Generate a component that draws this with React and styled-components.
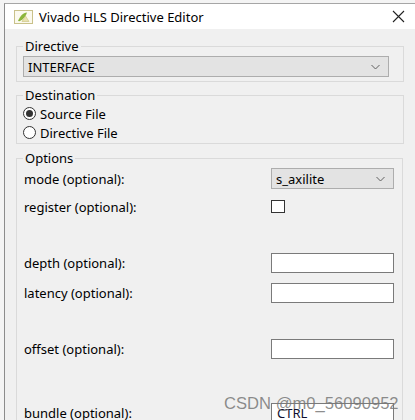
import React from 'react';
import styled, { createGlobalStyle } from 'styled-components';

const GlobalStyle = createGlobalStyle`
  html, body {
    margin: 0;
    padding: 0;
    background: #f4f4f4;
    overflow: hidden;
  }
  body {
    font-family: "Noto Sans", "Open Sans", sans-serif;
    font-size: 13px;
    color: #000;
  }
`;

const Screen = styled.div`
  width: 415px;
  height: 420px;
  padding: 3px 0 0 4px;
  box-sizing: border-box;
  position: relative;
  overflow: hidden;
`;

const Dialog = styled.div`
  width: 430px;
  height: 430px;
  background: #f0f0f0;
  border-left: 1px solid #8c8c8c;
  border-top: 1px solid #a6a6a6;
`;

const TitleBar = styled.div`
  height: 25px;
  background: #fff;
  display: flex;
  align-items: center;
  padding-left: 9px;
  gap: 6px;
  font-size: 13px;
`;

const Close = styled.div`
  margin-left: auto;
  margin-right: 30px;
  display: flex;
`;

const Body = styled.div`
  padding: 8px 0 0 11px;
  display: flex;
  flex-direction: column;
`;

const Group = styled.fieldset`
  width: ${p => p.$width || 387}px;
  box-sizing: border-box;
  margin: ${p => p.$top || 0}px 0 0;
  padding: 0 8px ${p => p.$bottom || 0}px 6px;
  border: 1px solid #dadada;
  min-width: 0;
`;

const Legend = styled.legend`
  padding: 0 2px;
  line-height: 18px;
  font-size: 13px;
`;

const Combo = styled.div`
  height: 21px;
  box-sizing: border-box;
  margin-top: ${p => p.$top || 0}px;
  width: ${p => p.$width ? `${p.$width}px` : 'auto'};
  background: #e3e3e3;
  border: 1px solid #adadad;
  display: flex;
  align-items: center;
  padding: 0 8px 0 4px;
  font-size: 13px;
  justify-content: space-between;
`;

const Radios = styled.div`
  display: flex;
  flex-direction: column;
`;

const RadioRow = styled.label`
  height: 19px;
  display: flex;
  align-items: center;
  gap: 4px;
`;

const RadioDot = styled.span`
  width: 13px;
  height: 13px;
  box-sizing: border-box;
  border-radius: 50%;
  border: 1px solid #333;
  background: #fff;
  display: flex;
  align-items: center;
  justify-content: center;

  &::after {
    content: '';
    width: 7px;
    height: 7px;
    border-radius: 50%;
    background: ${p => p.$checked ? '#333' : 'transparent'};
  }
`;

const Row = styled.div`
  display: grid;
  grid-template-columns: 1fr 123px;
  align-items: center;
  height: 21px;
  margin-top: ${p => p.$gap || 0}px;
`;

const Label = styled.span`
  padding-left: 1px;
`;

const Check = styled.span`
  width: 14px;
  height: 13px;
  box-sizing: border-box;
  border: 1px solid #333;
  background: #fff;
`;

const Field = styled.div`
  height: 20px;
  box-sizing: border-box;
  border: 1px solid #7a7a7a;
  background: #fff;
  padding: 0 5px;
  display: flex;
  align-items: center;
  font-size: 13px;
  color: #101030;
`;

const Watermark = styled.div`
  position: absolute;
  left: 224px;
  top: 394px;
  font-family: "Liberation Sans", Arial, sans-serif;
  font-size: 16.6px;
  color: rgba(120, 120, 120, 0.85);
  white-space: nowrap;
  pointer-events: none;
`;

function Chevron() {
  return (
    <svg width="9" height="6" viewBox="0 0 9 6">
      <polyline points="0.5,1 4.5,5 8.5,1" fill="none" stroke="#606060" strokeWidth="1" />
    </svg>
  );
}

function AppIcon() {
  return (
    <svg width="19" height="14" viewBox="0 0 19 14">
      <rect x="0.5" y="0.5" width="18" height="13" fill="#fbf9ee" stroke="#c9c18a" />
      <path d="M4 11 C6 6 9 3 13 2.5 C12 6 10 9 5.5 11.2 Z" fill="#8bb53a" />
      <path d="M8 11.5 L15 11.5 L11.5 6 Z" fill="#e8e2b0" stroke="#c8bf7a" strokeWidth="0.6" />
    </svg>
  );
}

function CloseIcon() {
  return (
    <svg width="13" height="13" viewBox="0 0 13 13">
      <path d="M1 1 L12 12 M12 1 L1 12" stroke="#222" strokeWidth="1.1" />
    </svg>
  );
}

const OPTIONS = [
  { label: 'mode (optional):', kind: 'combo', value: 's_axilite', gap: 1 },
  { label: 'register (optional):', kind: 'check', gap: 7 },
  { label: 'depth (optional):', kind: 'field', gap: 35 },
  { label: 'latency (optional):', kind: 'field', gap: 9 },
  { label: 'offset (optional):', kind: 'field', gap: 35 },
  { label: 'bundle (optional):', kind: 'field', value: 'CTRL', gap: 43 },
];

function Control({ kind, value }) {
  if (kind === 'combo') {
    return <Combo>{value}<Chevron /></Combo>;
  }
  if (kind === 'check') {
    return <Check />;
  }
  return <Field>{value}</Field>;
}

export default function App() {
  return (
    <>
      <GlobalStyle />
      <Screen>
        <Dialog>
          <TitleBar>
            <AppIcon />
            <span>Vivado HLS Directive Editor</span>
            <Close><CloseIcon /></Close>
          </TitleBar>
          <Body>
            <Group $width={388} $bottom={4}>
              <Legend>Directive</Legend>
              <Combo $top={1} $width={366}>INTERFACE<Chevron /></Combo>
            </Group>
            <Group $width={388} $top={4} $bottom={1}>
              <Legend>Destination</Legend>
              <Radios>
                <RadioRow><RadioDot $checked />Source File</RadioRow>
                <RadioRow><RadioDot />Directive File</RadioRow>
              </Radios>
            </Group>
            <Group $top={5} $bottom={20}>
              <Legend>Options</Legend>
              {OPTIONS.map(o => (
                <Row key={o.label} $gap={o.gap}>
                  <Label>{o.label}</Label>
                  <Control kind={o.kind} value={o.value} />
                </Row>
              ))}
            </Group>
          </Body>
        </Dialog>
        <Watermark>CSDN @m0_56090952</Watermark>
      </Screen>
    </>
  );
}
